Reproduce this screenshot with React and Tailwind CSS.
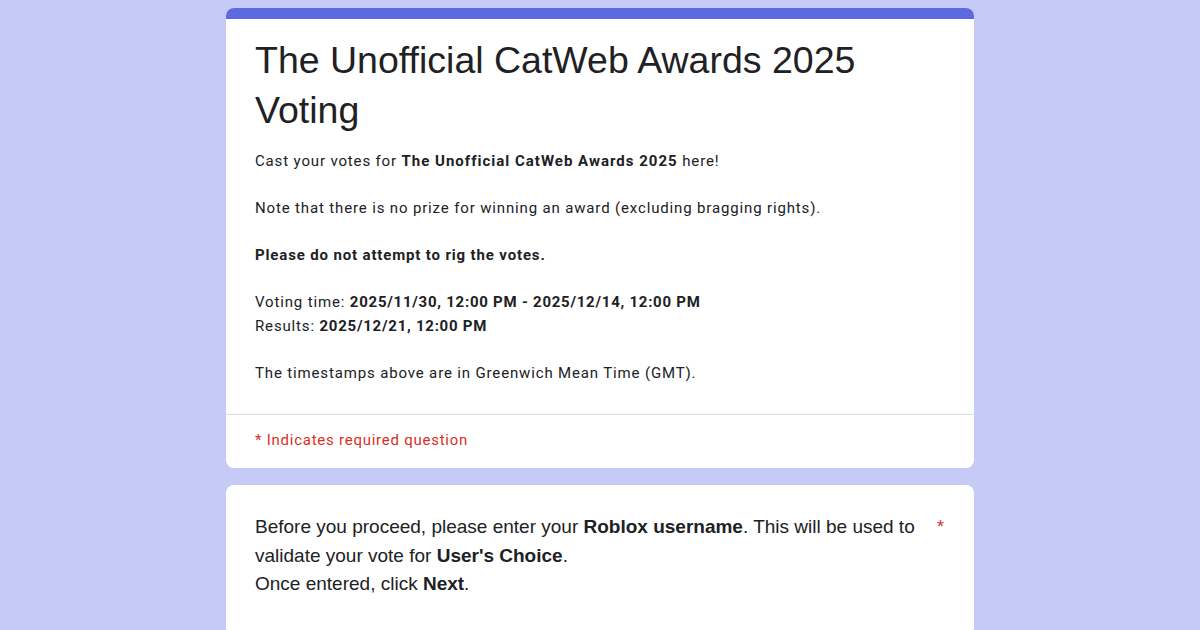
import React from 'react';

/**
 * Formulario de votación - réplica de Google Forms
 */
export default function App() {
    return (
        <div className="min-h-screen w-full bg-[#c6caf6] pt-[8px] pb-8">
            <div className="w-[748px] mx-auto flex flex-col gap-[17px]">
                {/* HEADER CARD */}
                <div className="bg-white rounded-[8px] overflow-hidden">
                    <div className="h-[11px] bg-[#5b6ae0]" />
                    <div className="px-[29px] pt-[16px] pb-[29px]">
                        <h1 className="text-[37.5px] leading-[50px] text-[#202124] font-['Liberation_Sans',Arial,sans-serif]">
                            The Unofficial CatWeb Awards 2025 Voting
                        </h1>
                        <div className="mt-[15px] text-[15px] leading-[23.5px] text-[#202124] font-['Roboto',sans-serif] tracking-[0.85px]">
                            <div>Cast your votes for <b className="font-bold tracking-[1px]">The Unofficial CatWeb Awards 2025</b> here!</div>
                            <div className="h-[23.5px]" />
                            <div>Note that there is no prize for winning an award (excluding bragging rights).</div>
                            <div className="h-[23.5px]" />
                            <div className="font-bold">Please do not attempt to rig the votes.</div>
                            <div className="h-[23.5px]" />
                            <div>Voting time: <b className="font-bold tracking-[0.75px]">2025/11/30, 12:00 PM - 2025/12/14, 12:00 PM</b></div>
                            <div>Results: <b className="font-bold tracking-[0.75px]">2025/12/21, 12:00 PM</b></div>
                            <div className="h-[23.5px]" />
                            <div>The timestamps above are in Greenwich Mean Time (GMT).</div>
                        </div>
                    </div>
                    <div className="border-t border-[#dadce0] px-[29px] pt-[13px] pb-[16px]">
                        <div className="text-[15px] leading-[24px] text-[#d93025] font-['Roboto',sans-serif] tracking-[0.75px]">
                            * Indicates required question
                        </div>
                    </div>
                </div>

                {/* QUESTION CARD */}
                <div className="bg-white rounded-[8px] px-[29px] pt-[28px] pb-[40px] min-h-[200px]">
                    <div className="flex items-start">
                        <div className="flex-1 pr-[20px] text-[19px] leading-[28.5px] text-[#202124] font-['Liberation_Sans',Arial,sans-serif]">
                            Before you proceed, please enter your <b className="font-bold">Roblox username</b>. This will be used to validate your vote for <b className="font-bold">User's Choice</b>.
                            <br />
                            Once entered, click <b className="font-bold">Next</b>.
                        </div>
                        <span className="text-[18px] leading-[28.5px] text-[#d93025] font-['Liberation_Sans',Arial,sans-serif] pr-[1px]">*</span>
                    </div>
                </div>
            </div>
        </div>
    );
}
